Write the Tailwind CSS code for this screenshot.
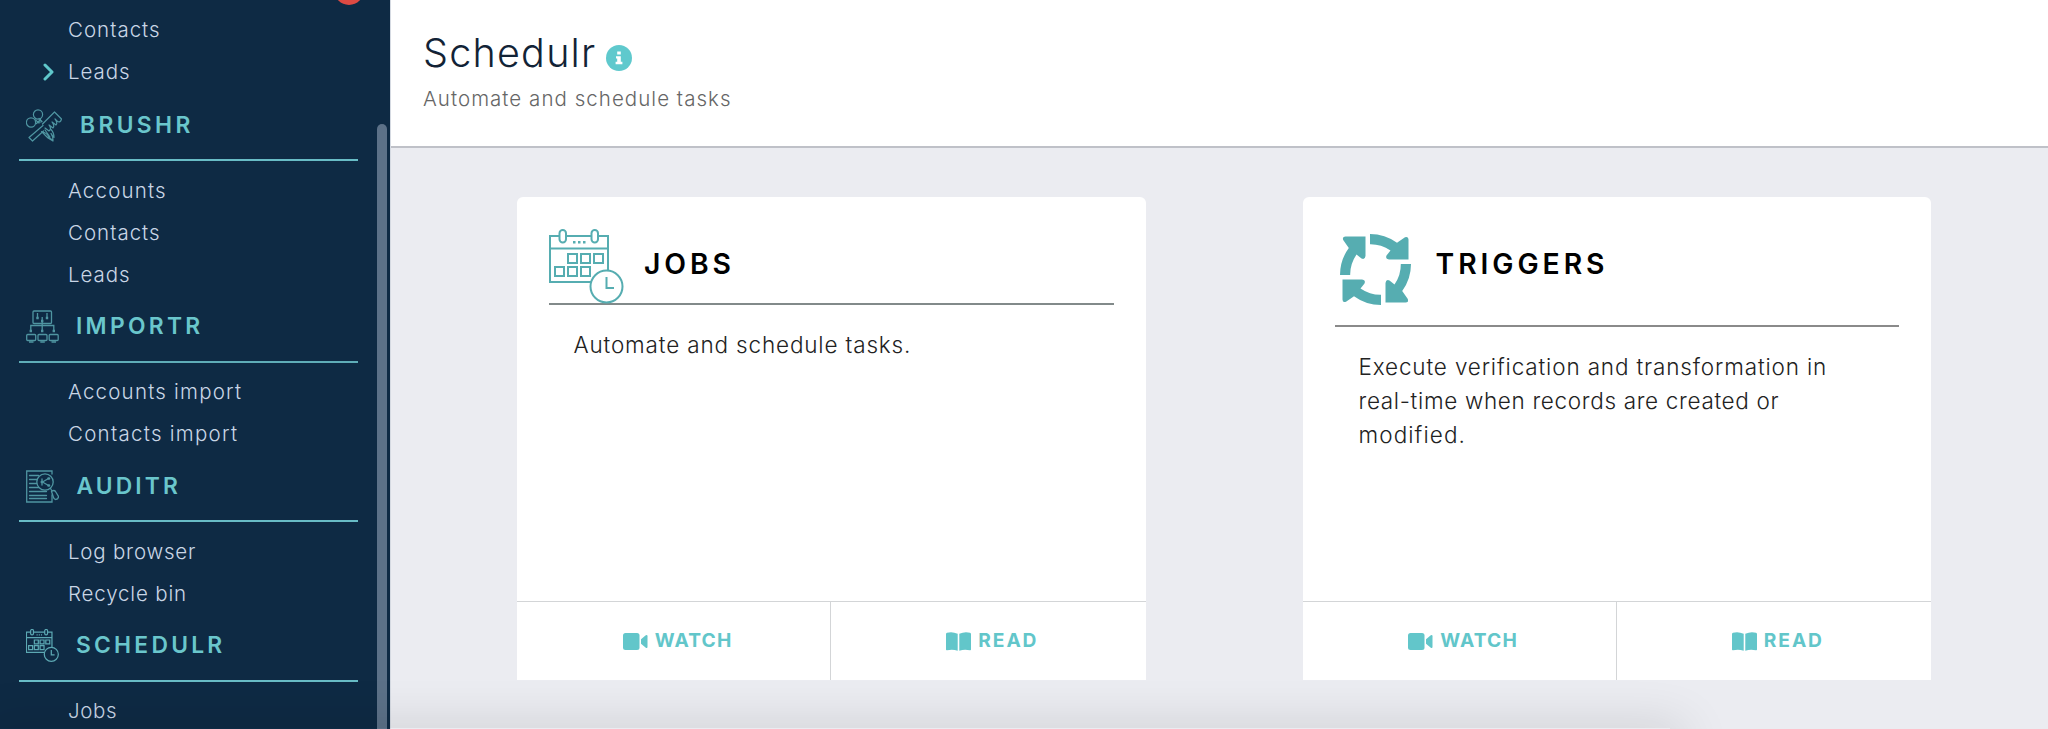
<!DOCTYPE html>
<html lang="en">
<head>
    <meta charset="UTF-8">
    <meta name="viewport" content="width=device-width, initial-scale=1.0">
    <title>Schedulr</title>
    <script src="https://cdn.jsdelivr.net/npm/@tailwindcss/browser@4"></script>
</head>
<body class="relative flex h-[729px] w-[2048px] overflow-hidden bg-[#ebecf1] font-['Inter','Liberation_Sans',sans-serif]">

    <!-- Shared icons -->
    <svg class="hidden">
        <symbol id="calendar" viewBox="0 0 75 75">
            <g fill="none" stroke="currentColor">
                <path d="M10 7H1v46h41M17 7h25M49 7h10v34M1 19.500h58"/>
                <rect x="10.500" y="1" width="6.500" height="12.500" rx="3.200"/>
                <rect x="42.500" y="1" width="6.500" height="12.500" rx="3.200"/>
                <path d="M19 25h9v9h-9zM32 25h9v9h-9zM45 25h9v9h-9zM6 38h9v9H6zM19 38h9v9h-9zM32 38h9v9h-9z"/>
                <circle cx="57.500" cy="57.500" r="16"/>
                <path d="M57.500 48v11H65"/>
            </g>
            <path fill="currentColor" d="M24 12h2.500v2.500H24zM29 12h2.500v2.500H29zM34 12h2.500v2.500H34z"/>
        </symbol>
        <symbol id="video" viewBox="0 0 25 17">
            <rect width="16.500" height="17" rx="2.500" fill="currentColor"/>
            <path fill="currentColor" d="M18 6.200 22.800 2.300Q24.500 1.300 24.500 3.200v10.600Q24.500 15.700 22.800 14.700L18 10.800z"/>
        </symbol>
        <symbol id="book" viewBox="0 0 25 19">
            <path fill="currentColor" d="M11.700 1.700Q6 -.8 1 .8 0 1.100 0 2v15.500q0 1 1 .8 5.500-1.400 10.700.4zM13.300 1.700Q19 -.8 24 .8 25 1.100 25 2v15.500q0 1-1 .8-5.500-1.400-10.700.4z"/>
        </symbol>
    </svg>

    <!-- Sidebar -->
    <aside class="relative flex h-[729px] w-[391px] shrink-0 flex-col overflow-hidden border-r border-[#d5dae2] bg-[#0e2a44] text-[20.5px] font-light leading-none text-[#c9d6e6]">
        <div class="absolute left-[334px] top-[-25px] h-[30px] w-[30px] rounded-full bg-[#de4a43]"></div>
        <div class="absolute bottom-0 left-[377px] top-[124px] w-[10px] rounded-t-full bg-[#5c7188]"></div>

        <nav class="pl-[68px] pt-[9px]">
            <div class="flex h-[42px] items-center tracking-[1px]">Contacts</div>
            <div class="relative flex h-[42px] items-center tracking-[0.940px]">
                <svg class="absolute left-[-25px] top-[12px] h-[18px] w-[11px] text-[#5fc7cb]" viewBox="0 0 11 18"><path d="M2 2l7 7-7 7" fill="none" stroke="currentColor" stroke-width="3" stroke-linecap="round" stroke-linejoin="round"/></svg>
                Leads
            </div>
        </nav>

        <div class="ml-[19px] mr-[32px] flex h-[68px] shrink-0 items-center border-b-2 border-[#68bcc6] pb-[2px] pl-[7px] text-[22.8px] font-semibold text-[#6ac6cc]">
            <svg class="h-[33px] w-[36px] text-[#4f95a1]" viewBox="0 0 36 33" fill="none" stroke="currentColor" stroke-width="1.200" stroke-linecap="round" stroke-linejoin="round">
                <circle cx="12" cy="5.500" r="4.600"/>
                <circle cx="5" cy="13.500" r="4.600"/>
                <path d="M9.500 11l3.500 3M13 9.500l3 3M10.500 14.500l4-4M12 13h3"/>
                <path d="M16.500 15 28.500 3l7 7q-1 4-4 2.500L29 10q3 4 1 6l-4-3q3 4 1 6l-4-3q3 4 0 6l-4-3M17 16.500 3 28.500l3.500 3.500 11-10"/>
                <path d="M15.500 22.500q6 1.500 7.500 6l4 3q0-4-2-7l3 4q0-5-3-8M19 21l5 7M16 23l6 6 5 3"/>
            </svg>
            <span class="ml-[18px] tracking-[3.400px]">BRUSHR</span>
        </div>
        <nav class="mt-[9px] pl-[68px]">
            <div class="flex h-[42px] items-center tracking-[1.170px]">Accounts</div>
            <div class="flex h-[42px] items-center tracking-[1px]">Contacts</div>
            <div class="flex h-[42px] items-center tracking-[0.940px]">Leads</div>
        </nav>

        <div class="ml-[19px] mr-[32px] flex h-[66.500px] shrink-0 items-center border-b-2 border-[#5fadb8] pb-[3px] pl-[7px] text-[22.8px] font-semibold text-[#6ac6cc]">
            <svg class="h-[33px] w-[33px] text-[#4f95a1]" viewBox="0 0 33 33" fill="none" stroke="currentColor" stroke-width="1.300">
                <rect x="7" y="1" width="18.500" height="12.500" rx="1"/>
                <path d="M11.500 3v6M16.200 7v7M21 3v6M4.800 21v-5.500h23V21M16.200 14v7"/>
                <path d="M10.300 8h2.400M15 11h2.400M19.800 8h2.400M3.600 21H6M15 21h2.400M26.600 21H29" stroke-width="2.400"/>
                <rect x="0.700" y="24.500" width="9" height="6" rx="1"/>
                <rect x="12" y="24.500" width="9" height="6" rx="1"/>
                <rect x="23.200" y="24.500" width="9" height="6" rx="1"/>
                <path d="M3 32h4.500M14.300 32h4.500M25.500 32H30"/>
            </svg>
            <span class="ml-[17px] tracking-[3.300px]">IMPORTR</span>
        </div>
        <nav class="mt-[9px] pl-[68px]">
            <div class="flex h-[42px] items-center tracking-[1.210px]">Accounts import</div>
            <div class="flex h-[42px] items-center tracking-[1.270px]">Contacts import</div>
        </nav>

        <div class="ml-[19px] mr-[32px] flex h-[66.500px] shrink-0 items-center border-b-2 border-[#68bcc6] pb-[3px] pl-[7px] text-[22.8px] font-semibold text-[#6ac6cc]">
            <svg class="h-[33px] w-[33px] text-[#4f95a1]" viewBox="0 0 33 33" fill="none" stroke="currentColor" stroke-width="1.300" stroke-linecap="round">
                <path d="M26 4V1H.700v31H26V25M3.500 5.500h9M3.500 9.500h7M3.500 13.500h7M3.500 17.500h9M3.500 21.500h17M3.500 25.500h17M3.500 28.500h17"/>
                <circle cx="19" cy="12" r="8.200"/>
                <path d="M16.500 12l6-3.500M16.500 12l6 3.500M16 9v6"/>
                <path d="M15.800 12h1M22.500 8.500h.500M22.500 15.500h.500" stroke-width="2.600"/>
                <path d="M24.500 18.500l1.500 2.500M25.500 21.500q2.500-2 4 0l3 5q0 3-3 3-1.500-.5-2-2z"/>
            </svg>
            <span class="ml-[17.500px] tracking-[3.150px]">AUDITR</span>
        </div>
        <nav class="mt-[9px] pl-[68px]">
            <div class="flex h-[42px] items-center tracking-[0.780px]">Log browser</div>
            <div class="flex h-[42px] items-center tracking-[0.830px]">Recycle bin</div>
        </nav>

        <div class="ml-[19px] mr-[32px] flex h-[66.500px] shrink-0 items-center border-b-2 border-[#68bcc6] pb-[3px] pl-[7px] text-[22.8px] font-semibold text-[#6ac6cc]">
            <svg class="h-[33px] w-[33px] text-[#5ca8b3]" stroke-width="2.800"><use href="#calendar"/></svg>
            <span class="ml-[17px] tracking-[3.250px]">SCHEDULR</span>
        </div>
        <nav class="mt-[9px] pl-[68px]">
            <div class="flex h-[42px] items-center tracking-[0.630px]">Jobs</div>
        </nav>
    </aside>

    <!-- Main -->
    <main class="flex grow flex-col">
        <header class="flex h-[148px] shrink-0 flex-col border-b-2 border-[#bfc1c8] bg-white pl-[32px] pt-[30px]">
            <div class="flex h-[48px] items-center">
                <h1 class="text-[39.5px] font-light leading-none tracking-[1.230px] text-[#122336]">Schedulr</h1>
                <svg class="ml-[9px] mt-[8px] h-[26px] w-[26px]" viewBox="0 0 26 26">
                    <circle cx="13" cy="13" r="13" fill="#5fc9cd"/>
                    <path d="M11.200 6.500h3.600v3h-3.600zM10 11.200h4.800v5.600h1.600v2.400H9.600v-2.400h1.600v-3.200H10z" fill="#fff"/>
                </svg>
            </div>
            <p class="mt-[10px] text-[20.5px] font-light leading-[22px] tracking-[1.040px] text-[#666]">Automate and schedule tasks</p>
        </header>

        <div class="flex gap-[157px] pl-[126px] pt-[49px]">
            <!-- Jobs card -->
            <section class="flex h-[483px] w-[628.500px] flex-col rounded-t-md bg-white">
                <div class="mx-[32px] mt-[32px] flex h-[76px] shrink-0 items-start border-b-2 border-[#828a8a]">
                    <svg class="h-[75px] w-[75px] text-[#56adb1]" stroke-width="2"><use href="#calendar"/></svg>
                    <h2 class="ml-[20px] mt-[20px] text-[28.3px] font-semibold leading-[30px] tracking-[3.900px]">JOBS</h2>
                </div>
                <p class="mt-[23px] grow pl-[56.500px] text-[22.5px] font-light leading-[34px] tracking-[0.840px] text-[#222]">Automate and schedule tasks.</p>
                <div class="flex h-[79px] border-t border-[#d3d5d7] text-[19.2px] font-bold leading-none text-[#62c6ca]">
                    <div class="flex w-1/2 items-center justify-center border-r border-[#d3d5d7] pl-[8px]">
                        <svg class="h-[17px] w-[25px]"><use href="#video"/></svg>
                        <span class="ml-[7px] tracking-[1.200px]">WATCH</span>
                    </div>
                    <div class="flex w-1/2 items-center justify-center pl-[8px]">
                        <svg class="h-[19px] w-[25px]"><use href="#book"/></svg>
                        <span class="ml-[7px] tracking-[1.900px]">READ</span>
                    </div>
                </div>
            </section>

            <!-- Triggers card -->
            <section class="flex h-[483px] w-[628.500px] flex-col rounded-t-md bg-white">
                <div class="mx-[32px] mt-[32px] flex h-[98px] shrink-0 items-start border-b-2 border-[#8a8a8a]">
                    <svg class="ml-[5px] mt-[5px] h-[71px] w-[71px] text-[#56adb1]" viewBox="0 0 71 71">
                        <g id="arrow" fill="currentColor">
                            <path d="M30 0Q45 0 57 8.800L65 3.200Q68.500 2 68.500 5.500V25.500H49Q45 25 46.500 21.500L50.500 16.500Q41 10 30 10.200z"/>
                        </g>
                        <use href="#arrow" transform="rotate(90 35.5 35.5)"/>
                        <use href="#arrow" transform="rotate(180 35.5 35.5)"/>
                        <use href="#arrow" transform="rotate(270 35.5 35.5)"/>
                    </svg>
                    <h2 class="ml-[25px] mt-[20px] text-[28.3px] font-semibold leading-[30px] tracking-[3.950px]">TRIGGERS</h2>
                </div>
                <p class="mt-[23px] grow pl-[56px] text-[22.5px] font-light leading-[34px] text-[#222]">
                    <span class="block tracking-[0.850px]">Execute verification and transformation in</span>
                    <span class="block tracking-[0.670px]">real-time when records are created or</span>
                    <span class="block tracking-[1.080px]">modified.</span>
                </p>
                <div class="flex h-[79px] border-t border-[#d3d5d7] text-[19.2px] font-bold leading-none text-[#62c6ca]">
                    <div class="flex w-1/2 items-center justify-center border-r border-[#d3d5d7] pl-[8px]">
                        <svg class="h-[17px] w-[25px]"><use href="#video"/></svg>
                        <span class="ml-[7px] tracking-[1.200px]">WATCH</span>
                    </div>
                    <div class="flex w-1/2 items-center justify-center pl-[8px]">
                        <svg class="h-[19px] w-[25px]"><use href="#book"/></svg>
                        <span class="ml-[7px] tracking-[1.900px]">READ</span>
                    </div>
                </div>
            </section>
        </div>
    </main>

    <!-- Soft shade along the bottom edge -->
    <div class="absolute bottom-0 left-0 h-px w-[1670px] shadow-[0_14px_50px_14px_rgba(0,0,0,0.16)]"></div>
</body>
</html>
